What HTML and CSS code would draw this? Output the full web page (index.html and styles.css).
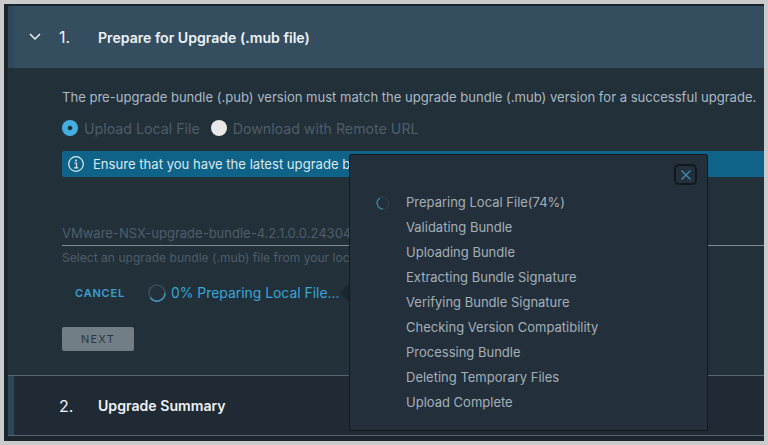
FILE: index.html
```html
<!DOCTYPE html>
<html lang="en">
<head>
    <meta charset="UTF-8">
    <title>Upgrade</title>
    <link rel="stylesheet" href="styles.css">
</head>
<body>
    <div class="frame">
        <div class="step-head step-open">
            <svg class="chevron" width="14" height="10" viewBox="0 0 14 10"><path d="M2 2l5 5 5-5" fill="none" stroke="#eef2f4" stroke-width="1.5"/></svg>
            <span class="step-num">1.</span>
            <span class="step-title">Prepare for Upgrade (.mub file)</span>
        </div>

        <div class="step-body">
            <p class="intro">The pre-upgrade bundle (.pub) version must match the upgrade bundle (.mub) version for a successful upgrade.</p>

            <div class="radios">
                <span class="radio radio-on"></span>
                <span class="radio-label">Upload Local File</span>
                <span class="radio radio-off"></span>
                <span class="radio-label">Download with Remote URL</span>
            </div>

            <div class="banner">
                <svg width="18" height="18" viewBox="0 0 18 18"><circle cx="9" cy="9" r="7.3" fill="none" stroke="#dfe9ef" stroke-width="1.2"/><circle cx="9" cy="5.4" r="1" fill="#dfe9ef"/><path d="M7.3 8h2.2v4.6M7 12.8h4.2" fill="none" stroke="#dfe9ef" stroke-width="1.2"/></svg>
                <span>Ensure that you have the latest upgrade bundle</span>
            </div>

            <div class="file-name">VMware-NSX-upgrade-bundle-4.2.1.0.0.24304122</div>
            <div class="file-help">Select an upgrade bundle (.mub) file from your local system</div>

            <div class="actions">
                <span class="cancel">CANCEL</span>
                <svg class="spinner" width="20" height="20" viewBox="0 0 20 20"><circle cx="10" cy="10" r="8" fill="none" stroke="#3a4c58" stroke-width="1.6"/><path d="M18 10a8 8 0 0 1-14.5 4.7" fill="none" stroke="#3f8db5" stroke-width="1.6"/></svg>
                <span class="progress">0% Preparing Local File...</span>
            </div>

            <div class="next">NEXT</div>
        </div>

        <div class="step-head step-closed">
            <span class="step-num">2.</span>
            <span class="step-title">Upgrade Summary</span>
        </div>

        <div class="popover">
            <span class="arrow"></span>
            <div class="close">
                <svg width="12" height="12" viewBox="0 0 12 12"><path d="M1.5 1.5l9 9M10.5 1.5l-9 9" stroke="#3f8db5" stroke-width="1.3"/></svg>
            </div>
            <ul class="tasks">
                <li class="task">
                    <svg class="task-spin" width="14" height="14" viewBox="0 0 14 14"><circle cx="7" cy="7" r="5.8" fill="none" stroke="#2f3f4b" stroke-width="1.3"/><path d="M4 2a5.8 5.8 0 0 0 3 10.8" fill="none" stroke="#3f7fa3" stroke-width="1.3"/></svg>
                    Preparing Local File(74%)
                </li>
                <li class="task">Validating Bundle</li>
                <li class="task">Uploading Bundle</li>
                <li class="task">Extracting Bundle Signature</li>
                <li class="task">Verifying Bundle Signature</li>
                <li class="task">Checking Version Compatibility</li>
                <li class="task">Processing Bundle</li>
                <li class="task">Deleting Temporary Files</li>
                <li class="task">Upload Complete</li>
            </ul>
        </div>
    </div>
</body>
</html>
```

FILE: styles.css
```css
* {
    box-sizing: border-box;
}

html, body {
    height: 100%;
}

body {
    margin: 0;
    padding: 4px;
    background: #cbcbcb;
    font-family: "Inter", "Open Sans", sans-serif;
    overflow: hidden;
}

.frame {
    position: relative;
    width: 760px;
    height: 437px;
    padding: 2px 0 5px 4px;
    background: #1a252d;
    overflow: hidden;
}

.step-head {
    display: flex;
    align-items: center;
}

.step-open {
    height: 62px;
    padding-left: 20px;
    background: linear-gradient(to right, #2f495b 6px, #344e60 6px);
}

.step-closed {
    height: 61px;
    padding-left: 51px;
    background: linear-gradient(to right, #2c4759 6px, #1f2a34 6px);
    border-top: 1px solid #56646f;
    border-bottom: 1px solid #56646f;
}

.chevron {
    margin-right: 17px;
}

.step-num {
    width: 39px;
    color: #f2f5f7;
    font-size: 16px;
}

.step-title {
    color: #eef2f5;
    font-size: 14.1px;
    font-weight: 600;
}

.step-body {
    height: 307px;
    padding: 21px 0 0 54px;
    background: #22303a;
}

.intro {
    margin: 0 0 14px 0;
    color: #aab9c4;
    font-size: 13.05px;
    line-height: 16px;
    white-space: nowrap;
}

.radios {
    display: flex;
    align-items: center;
    height: 18px;
    margin-bottom: 14px;
    color: #4e5d68;
    font-size: 14.2px;
}

.radio {
    width: 16px;
    height: 16px;
    margin-right: 6px;
    border-radius: 50%;
}

.radio-on {
    background: radial-gradient(circle, #22303a 1.6px, #45aee0 2.8px);
}

.radio-off {
    margin-left: 11px;
    background: #e8e8e8;
}

.banner {
    display: flex;
    align-items: center;
    gap: 8px;
    height: 26px;
    padding-left: 5px;
    margin-bottom: 47px;
    background: #0f6388;
    color: #dce8ef;
    font-size: 13.1px;
    white-space: nowrap;
    border-radius: 2px 0 0 2px;
}

.file-name {
    height: 22px;
    color: #4f5e69;
    font-size: 13px;
    line-height: 18px;
    white-space: nowrap;
    border-bottom: 1px solid #7d8a93;
}

.file-help {
    margin-top: 4px;
    color: #4d5c67;
    font-size: 12.1px;
    line-height: 15px;
    white-space: nowrap;
}

.actions {
    display: flex;
    align-items: center;
    height: 24px;
    margin-top: 16px;
}

.cancel {
    width: 85px;
    padding-left: 13px;
    color: #3a9fcf;
    font-size: 11px;
    font-weight: 600;
    letter-spacing: 0.8px;
}

.spinner {
    margin-right: 4px;
}

.progress {
    color: #3aa5d6;
    font-size: 13.9px;
    white-space: nowrap;
}

.next {
    width: 72px;
    height: 24px;
    margin-top: 22px;
    background: #717e85;
    border-radius: 2px;
    color: #2a3740;
    font-size: 11px;
    line-height: 24px;
    letter-spacing: 1.2px;
    text-align: center;
}

/* floats over the form */
.popover {
    position: absolute;
    left: 345px;
    top: 150px;
    width: 359px;
    height: 277px;
    padding: 35px 0 0 33px;
    background: #232f3b;
    border: 1px solid #121a20;
    border-radius: 2px;
}

.arrow {
    position: absolute;
    left: -10px;
    top: 129px;
    width: 9px;
    height: 18px;
    background: #1a262e;
    clip-path: polygon(100% 0, 0 50%, 100% 100%);
}

.close {
    position: absolute;
    right: 10px;
    top: 9px;
    display: flex;
    align-items: center;
    justify-content: center;
    width: 23px;
    height: 21px;
    border: 2px solid #10181d;
    border-radius: 5px;
}

.tasks {
    margin: 0;
    padding: 0;
    list-style: none;
}

.task {
    position: relative;
    height: 25px;
    padding-left: 23px;
    color: #a3afb9;
    font-size: 13px;
    line-height: 25px;
    white-space: nowrap;
}

.task-spin {
    position: absolute;
    left: -7px;
    top: 6px;
}
```
